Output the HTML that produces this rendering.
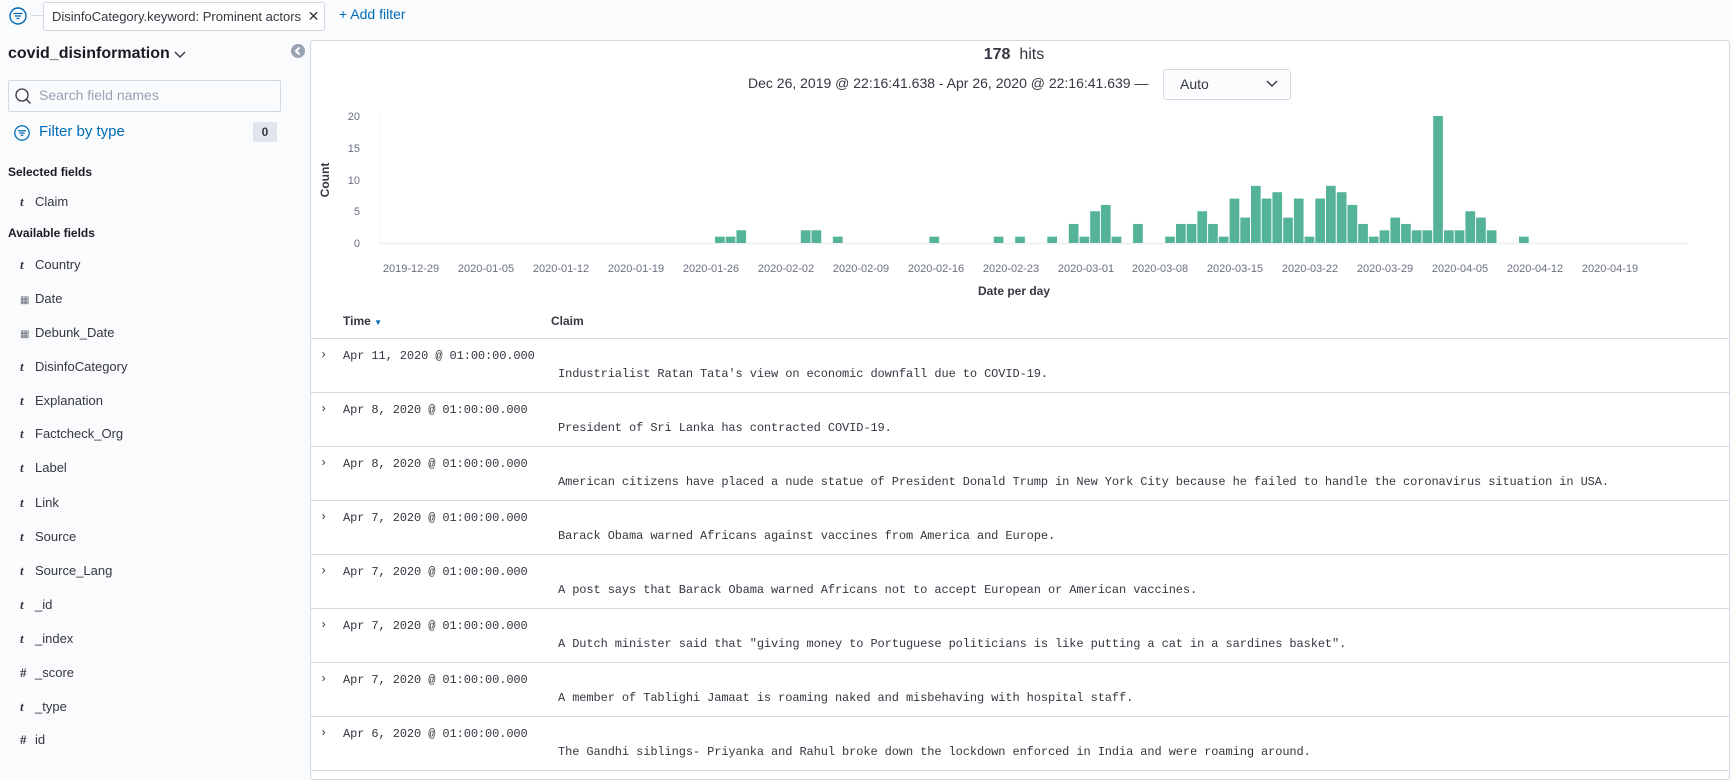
<!DOCTYPE html>
<html><head><meta charset="utf-8">
<style>
*{box-sizing:border-box;margin:0;padding:0}
body{width:1732px;height:772px;overflow:hidden;background:#fafbfd;font-family:"Liberation Sans",sans-serif;color:#343741;position:relative}
.a{position:absolute;white-space:nowrap}
.mono{font-family:"Liberation Mono",monospace;font-size:12px;color:#343741;letter-spacing:-0.1px}
.fld{position:absolute;left:20px;font-size:13px;color:#343741}
.fld i{display:inline-block;width:15px;font-style:italic;font-weight:bold;font-family:"Liberation Serif",serif;font-size:13px}
.fld i.cal{font-style:normal;font-weight:normal;font-size:10px;color:#69707d;font-family:"DejaVu Sans",sans-serif}
.row{position:absolute;left:311px;width:1418px;height:54px;border-bottom:1px solid #d3dae6}
</style></head><body>
<svg class="a" style="left:8px;top:6px" width="20" height="20" viewBox="0 0 20 20"><circle cx="10" cy="10" r="8" fill="none" stroke="#006bb4" stroke-width="1.4"/><path d="M5.5 7.5h9M7 10h6M8.5 12.5h3" stroke="#006bb4" stroke-width="1.3"/></svg>
<div class="a" style="left:31px;top:15px;width:12px;border-top:1px solid #d3dae6"></div>
<div class="a" style="left:43px;top:2px;width:282px;height:29px;background:#fff;border:1px solid #d3dae6;border-radius:3px;font-size:13px;line-height:27px;padding-left:8px">DisinfoCategory.keyword: Prominent actors <span style="margin-left:3px;font-size:14px">✕</span></div>
<div class="a" style="left:339px;top:6px;font-size:14px;color:#006bb4">+ Add filter</div>
<div class="a" style="left:8px;top:45px;font-size:16px;font-weight:bold;color:#1a1c21">covid_disinformation</div>
<svg class="a" style="left:173px;top:50px" width="14" height="10"><path d="M2 2l5 5 5-5" fill="none" stroke="#343741" stroke-width="1.4"/></svg>
<svg class="a" style="left:291px;top:44px" width="14" height="14"><circle cx="7" cy="7" r="7" fill="#98a2b3"/><path d="M8.5 3.5L5 7l3.5 3.5" fill="none" stroke="#fff" stroke-width="2"/></svg>
<div class="a" style="left:8px;top:80px;width:273px;height:32px;background:#fbfcfd;border:1px solid #d3dae6;border-radius:2px"></div>
<svg class="a" style="left:14px;top:87px" width="18" height="18"><circle cx="8" cy="8" r="6" fill="none" stroke="#343741" stroke-width="1.3"/><path d="M12.5 12.5l4 4" stroke="#343741" stroke-width="1.3"/></svg>
<div class="a" style="left:39px;top:87px;font-size:14px;color:#98a2b3">Search field names</div>
<svg class="a" style="left:13px;top:124px" width="18" height="18" viewBox="0 0 20 20"><circle cx="10" cy="10" r="8" fill="none" stroke="#006bb4" stroke-width="1.4"/><path d="M5.5 7.5h9M7 10h6M8.5 12.5h3" stroke="#006bb4" stroke-width="1.3"/></svg>
<div class="a" style="left:39px;top:123px;font-size:15px;color:#006bb4">Filter by type</div>
<div class="a" style="left:253px;top:122px;width:24px;height:20px;background:#e0e5ee;border-radius:2px;font-size:12px;font-weight:bold;text-align:center;line-height:20px">0</div>
<div class="a" style="left:8px;top:165px;font-size:12px;font-weight:bold;color:#1a1c21">Selected fields</div>
<div class="fld" style="top:194px"><i>t</i>Claim</div>
<div class="a" style="left:8px;top:226px;font-size:12px;font-weight:bold;color:#1a1c21">Available fields</div>
<div class="fld" style="top:257px"><i>t</i>Country</div>
<div class="fld" style="top:291px"><i class="cal">▦</i>Date</div>
<div class="fld" style="top:325px"><i class="cal">▦</i>Debunk_Date</div>
<div class="fld" style="top:359px"><i>t</i>DisinfoCategory</div>
<div class="fld" style="top:393px"><i>t</i>Explanation</div>
<div class="fld" style="top:426px"><i>t</i>Factcheck_Org</div>
<div class="fld" style="top:460px"><i>t</i>Label</div>
<div class="fld" style="top:495px"><i>t</i>Link</div>
<div class="fld" style="top:529px"><i>t</i>Source</div>
<div class="fld" style="top:563px"><i>t</i>Source_Lang</div>
<div class="fld" style="top:597px"><i>t</i>_id</div>
<div class="fld" style="top:631px"><i>t</i>_index</div>
<div class="fld" style="top:665px"><i style="font-style:normal">#</i>_score</div>
<div class="fld" style="top:699px"><i>t</i>_type</div>
<div class="fld" style="top:732px"><i style="font-style:normal">#</i>id</div>
<div class="a" style="left:310px;top:40px;width:1420px;height:740px;background:#fff;border:1px solid #d3dae6;border-radius:4px"></div>
<div class="a" style="left:0;width:2028px;top:46px;text-align:center;font-size:16px"><b style="font-size:16px">178</b>&nbsp; hits</div>
<div class="a" style="left:748px;top:75px;font-size:14px">Dec 26, 2019 @ 22:16:41.638 - Apr 26, 2020 @ 22:16:41.639 —</div>
<div class="a" style="left:1163px;top:69px;width:128px;height:31px;background:#fbfcfd;border:1px solid #d3dae6;border-radius:3px;font-size:14px;line-height:29px;padding-left:16px">Auto</div>
<svg class="a" style="left:1265px;top:79px" width="14" height="10"><path d="M2 2l5 5 5-5" fill="none" stroke="#343741" stroke-width="1.4"/></svg>
<svg class="a" style="left:0;top:0" width="1732" height="300">
<g font-family="Liberation Sans" font-size="11" fill="#69707d" text-anchor="end">
<text x="360" y="120">20</text><text x="360" y="152">15</text><text x="360" y="184">10</text><text x="360" y="215">5</text><text x="360" y="247">0</text></g>
<text transform="translate(329,180) rotate(-90)" text-anchor="middle" font-family="Liberation Sans" font-size="12" font-weight="bold" fill="#343741">Count</text>
<line x1="379" y1="243.5" x2="1688" y2="243.5" stroke="#eef0f3" stroke-width="2"/>
<line x1="379.5" y1="115" x2="379.5" y2="243" stroke="#f5f7fa"/>
<g font-family="Liberation Sans" font-size="11" fill="#69707d" text-anchor="middle">
<text x="411" y="272">2019-12-29</text><text x="486" y="272">2020-01-05</text><text x="561" y="272">2020-01-12</text><text x="636" y="272">2020-01-19</text><text x="711" y="272">2020-01-26</text><text x="786" y="272">2020-02-02</text><text x="861" y="272">2020-02-09</text><text x="936" y="272">2020-02-16</text><text x="1011" y="272">2020-02-23</text><text x="1086" y="272">2020-03-01</text><text x="1160" y="272">2020-03-08</text><text x="1235" y="272">2020-03-15</text><text x="1310" y="272">2020-03-22</text><text x="1385" y="272">2020-03-29</text><text x="1460" y="272">2020-04-05</text><text x="1535" y="272">2020-04-12</text><text x="1610" y="272">2020-04-19</text></g>
<text x="1014" y="295" text-anchor="middle" font-family="Liberation Sans" font-size="12" font-weight="bold" fill="#343741">Date per day</text>
<g transform="translate(0,243) scale(1,-1)" fill="#54b399">
<rect x="715" width="9.7" height="6.35"/><rect x="725.7" width="9.7" height="6.35"/><rect x="736.4" width="9.7" height="12.7"/>
<rect x="800.8" width="9.7" height="12.7"/><rect x="811.5" width="9.7" height="12.7"/><rect x="832.9" width="9.7" height="6.35"/>
<rect x="929.4" width="9.7" height="6.35"/><rect x="993.7" width="9.7" height="6.35"/><rect x="1015.2" width="9.7" height="6.35"/>
<rect x="1047.3" width="9.7" height="6.35"/><rect x="1068.8" width="9.7" height="19.05"/><rect x="1079.5" width="9.7" height="6.35"/>
<rect x="1090.2" width="9.7" height="31.75"/><rect x="1100.9" width="9.7" height="38.1"/><rect x="1111.6" width="9.7" height="6.35"/>
<rect x="1133.1" width="9.7" height="19.05"/><rect x="1165.2" width="9.7" height="6.35"/><rect x="1176" width="9.7" height="19.05"/>
<rect x="1186.7" width="9.7" height="19.05"/><rect x="1197.4" width="9.7" height="31.75"/><rect x="1208.1" width="9.7" height="19.05"/>
<rect x="1218.8" width="9.7" height="6.35"/><rect x="1229.6" width="9.7" height="44.45"/><rect x="1240.3" width="9.7" height="25.4"/>
<rect x="1251" width="9.7" height="57.15"/><rect x="1261.7" width="9.7" height="44.45"/><rect x="1272.4" width="9.7" height="50.8"/>
<rect x="1283.2" width="9.7" height="25.4"/><rect x="1293.9" width="9.7" height="44.45"/><rect x="1304.6" width="9.7" height="6.35"/>
<rect x="1315.3" width="9.7" height="44.45"/><rect x="1326" width="9.7" height="57.15"/><rect x="1336.8" width="9.7" height="50.8"/>
<rect x="1347.5" width="9.7" height="38.1"/><rect x="1358.2" width="9.7" height="19.05"/><rect x="1368.9" width="9.7" height="6.35"/>
<rect x="1379.6" width="9.7" height="12.7"/><rect x="1390.4" width="9.7" height="25.4"/><rect x="1401.1" width="9.7" height="19.05"/>
<rect x="1411.8" width="9.7" height="12.7"/><rect x="1422.5" width="9.7" height="12.7"/><rect x="1433.2" width="9.7" height="127"/>
<rect x="1444" width="9.7" height="12.7"/><rect x="1454.7" width="9.7" height="12.7"/><rect x="1465.4" width="9.7" height="31.75"/>
<rect x="1476.1" width="9.7" height="25.4"/><rect x="1486.8" width="9.7" height="12.7"/><rect x="1519" width="9.7" height="6.35"/>
</g></svg>
<div class="a" style="left:343px;top:314px;font-size:12px;font-weight:bold">Time <span style="color:#006bb4;font-size:8px">▼</span></div>
<div class="a" style="left:551px;top:314px;font-size:12px;font-weight:bold">Claim</div>
<div class="a" style="left:311px;top:338px;width:1418px;border-top:1px solid #d3dae6"></div>
<div class="row" style="top:339px"></div><div class="row" style="top:393px"></div><div class="row" style="top:447px"></div><div class="row" style="top:501px"></div><div class="row" style="top:555px"></div><div class="row" style="top:609px"></div><div class="row" style="top:663px"></div><div class="row" style="top:717px"></div>
<div class="a mono" style="left:320px;top:348px">›</div><div class="a mono" style="left:343px;top:349px">Apr 11, 2020 @ 01:00:00.000</div><div class="a mono" style="left:558px;top:367px">Industrialist Ratan Tata's view on economic downfall due to COVID-19.</div>
<div class="a mono" style="left:320px;top:402px">›</div><div class="a mono" style="left:343px;top:403px">Apr 8, 2020 @ 01:00:00.000</div><div class="a mono" style="left:558px;top:421px">President of Sri Lanka has contracted COVID-19.</div>
<div class="a mono" style="left:320px;top:456px">›</div><div class="a mono" style="left:343px;top:457px">Apr 8, 2020 @ 01:00:00.000</div><div class="a mono" style="left:558px;top:475px">American citizens have placed a nude statue of President Donald Trump in New York City because he failed to handle the coronavirus situation in USA.</div>
<div class="a mono" style="left:320px;top:510px">›</div><div class="a mono" style="left:343px;top:511px">Apr 7, 2020 @ 01:00:00.000</div><div class="a mono" style="left:558px;top:529px">Barack Obama warned Africans against vaccines from America and Europe.</div>
<div class="a mono" style="left:320px;top:564px">›</div><div class="a mono" style="left:343px;top:565px">Apr 7, 2020 @ 01:00:00.000</div><div class="a mono" style="left:558px;top:583px">A post says that Barack Obama warned Africans not to accept European or American vaccines.</div>
<div class="a mono" style="left:320px;top:618px">›</div><div class="a mono" style="left:343px;top:619px">Apr 7, 2020 @ 01:00:00.000</div><div class="a mono" style="left:558px;top:637px">A Dutch minister said that "giving money to Portuguese politicians is like putting a cat in a sardines basket".</div>
<div class="a mono" style="left:320px;top:672px">›</div><div class="a mono" style="left:343px;top:673px">Apr 7, 2020 @ 01:00:00.000</div><div class="a mono" style="left:558px;top:691px">A member of Tablighi Jamaat is roaming naked and misbehaving with hospital staff.</div>
<div class="a mono" style="left:320px;top:726px">›</div><div class="a mono" style="left:343px;top:727px">Apr 6, 2020 @ 01:00:00.000</div><div class="a mono" style="left:558px;top:745px">The Gandhi siblings- Priyanka and Rahul broke down the lockdown enforced in India and were roaming around.</div>
</body></html>
